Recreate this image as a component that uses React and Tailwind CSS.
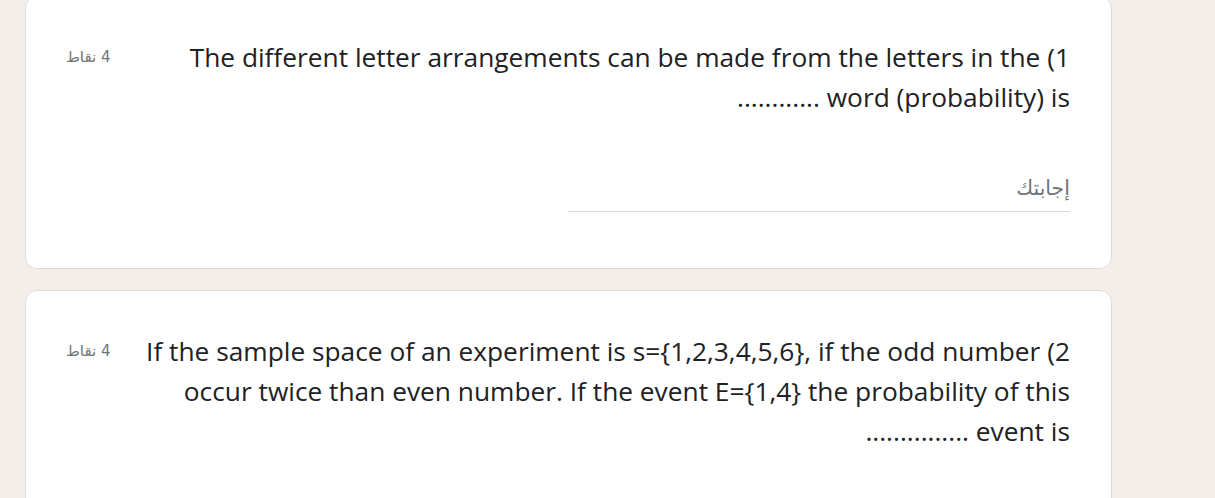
export default function App() {
  const q = "text-[#202124] text-[26.3px] leading-[40px] text-right whitespace-nowrap";
  const font = { fontFamily: "'Open Sans', Roboto, 'Noto Sans', sans-serif" };
  const ar = { fontFamily: "'DejaVu Sans', 'Noto Sans', sans-serif" };
  const Points = () => (
    <div dir="rtl" className="text-[15px] leading-[40px] text-[#70757a] whitespace-nowrap" style={ar}>
      4 نقاط
    </div>
  );
  return (
    <div className="w-[1215px] h-[498px] overflow-hidden bg-[#f5ede8]" style={font}>
      <div className="ml-[25px] w-[1087px] -mt-[4px] flex flex-col gap-[21px]">
        <div className="bg-white border border-[#dadce0] rounded-[12px] pt-[40px] pb-[56px] pl-[40px] pr-[41px]">
          <div className="flex justify-between items-start">
            <Points />
            <div className={q}>
              <div>The different letter arrangements can be made from the letters in the (1</div>
              <div>............ word (probability) is</div>
            </div>
          </div>
          <div className="flex justify-end mt-[59px]">
            <div className="w-1/2 border-b border-[#dadce0] pb-[10px] text-right">
              <span dir="rtl" className="text-[20.5px] leading-[24px] text-[#70757a]" style={ar}>إجابتك</span>
            </div>
          </div>
        </div>
        <div className="bg-white border border-[#dadce0] rounded-[12px] pt-[40px] pb-[120px] pl-[40px] pr-[41px]">
          <div className="flex justify-between items-start">
            <Points />
            <div className={q}>
              <div>If the sample space of an experiment is s={"{"}1,2,3,4,5,6{"}"}, if the odd number (2</div>
              <div>occur twice than even number. If the event E={"{"}1,4{"}"} the probability of this</div>
              <div>............... event is</div>
            </div>
          </div>
        </div>
      </div>
    </div>
  );
}
